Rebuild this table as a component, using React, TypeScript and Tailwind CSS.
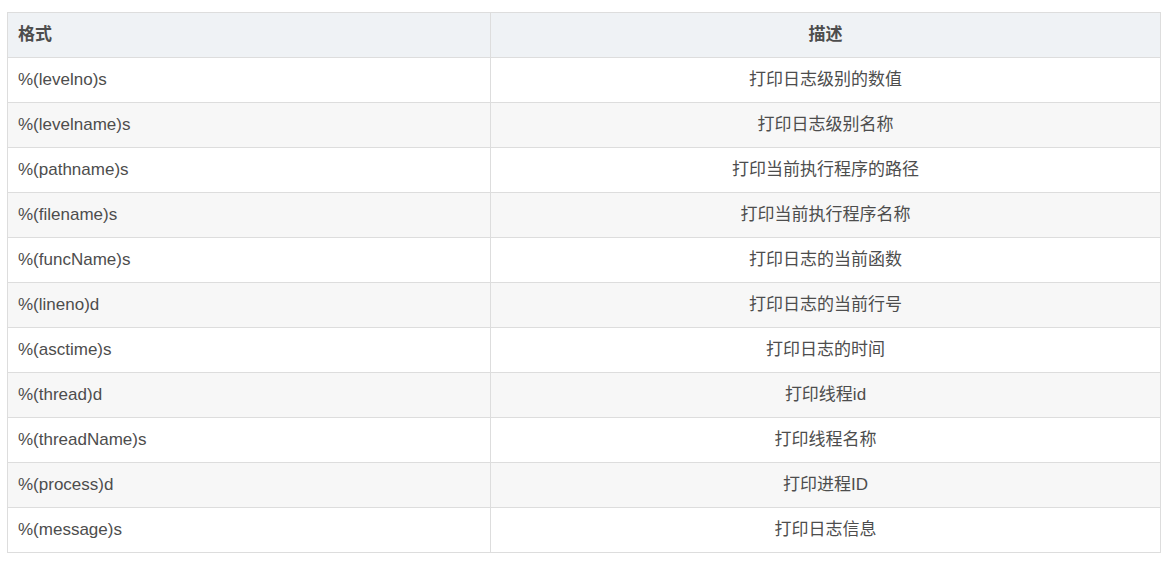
const rows: [string, string][] = [
  ['%(levelno)s', '打印日志级别的数值'],
  ['%(levelname)s', '打印日志级别名称'],
  ['%(pathname)s', '打印当前执行程序的路径'],
  ['%(filename)s', '打印当前执行程序名称'],
  ['%(funcName)s', '打印日志的当前函数'],
  ['%(lineno)d', '打印日志的当前行号'],
  ['%(asctime)s', '打印日志的时间'],
  ['%(thread)d', '打印线程id'],
  ['%(threadName)s', '打印线程名称'],
  ['%(process)d', '打印进程ID'],
  ['%(message)s', '打印日志信息'],
];

export default function App() {
  return (
    <div
      className="bg-white w-[1171px] h-[562px] pt-3 pl-[7px]"
      style={{ fontFamily: '"Liberation Sans", "Noto Sans CJK SC", sans-serif' }}
    >
      <table className="w-[1154px] border-collapse text-[17px] text-[#4d4d4d] table-fixed">
        <colgroup>
          <col className="w-[483px]" />
          <col />
        </colgroup>
        <thead>
          <tr className="bg-[#eff2f5] h-[45px]">
            <th className="border border-[#dddddd] px-[10px] text-left font-bold">格式</th>
            <th className="border border-[#dddddd] px-[10px] text-center font-bold">描述</th>
          </tr>
        </thead>
        <tbody>
          {rows.map(([fmt, desc], i) => (
            <tr key={fmt} className={i % 2 === 1 ? 'bg-[#f7f7f7] h-[45px]' : 'bg-white h-[45px]'}>
              <td className="border border-[#dddddd] px-[10px] text-left">{fmt}</td>
              <td className="border border-[#dddddd] px-[10px] text-center">{desc}</td>
            </tr>
          ))}
        </tbody>
      </table>
    </div>
  );
}
